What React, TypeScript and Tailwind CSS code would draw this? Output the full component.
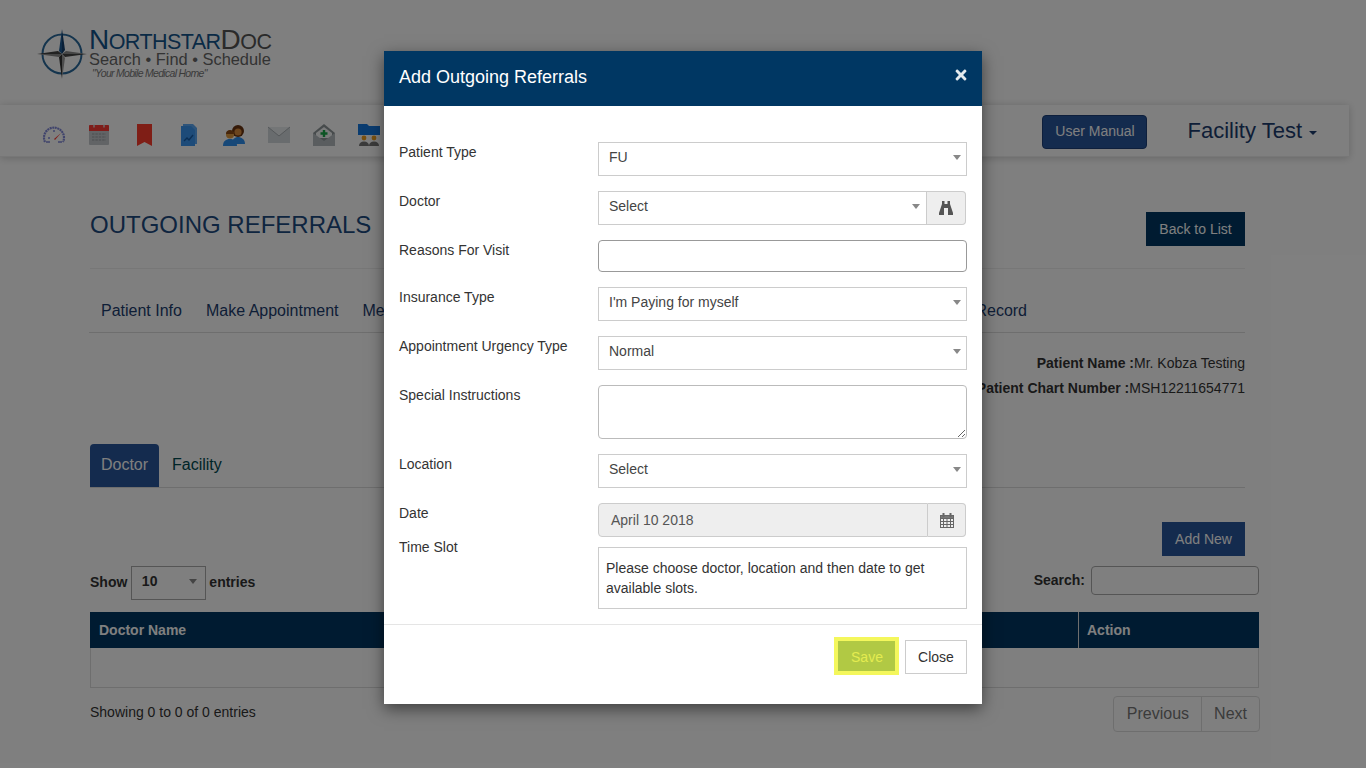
import { FaTimes } from "react-icons/fa";

function Caret() {
  return <span className="h-0 w-0 border-x-[4px] border-t-[5px] border-x-transparent border-t-[#888]" />;
}

function Compass() {
  return (
    <svg width="52" height="52" viewBox="0 0 52 52" className="shrink-0">
      <circle cx="26" cy="26" r="19.500" fill="none" stroke="#2a6a9c" strokeWidth="2" />
      <path d="M26 1 L29 22 L26 26 Z" fill="#123f6e" />
      <path d="M26 1 L23 23 L26 26 Z" fill="#1c5a94" />
      <path d="M51 26 L30 23 L26 26 Z" fill="#8a8a8a" />
      <path d="M51 26 L29 29 L26 26 Z" fill="#444" />
      <path d="M26 51 L29 30 L26 26 Z" fill="#999" />
      <path d="M26 51 L23 29 L26 26 Z" fill="#333" />
      <path d="M1 26 L22 23 L26 26 Z" fill="#444" />
      <path d="M1 26 L23 29 L26 26 Z" fill="#8a8a8a" />
    </svg>
  );
}

function Binoculars() {
  return (
    <svg width="16" height="16" viewBox="0 0 16 16" fill="#555">
      <path d="M4 1h2.500v3h3V1H12v3l3 9v2h-5V8H6v7H1v-2l3-9Z" />
    </svg>
  );
}

function CalendarGrid() {
  return (
    <svg width="14" height="15" viewBox="0 0 14 15" fill="none" stroke="#666" strokeWidth="1">
      <rect x="0.500" y="2.500" width="13" height="12" fill="#eee" />
      <path d="M0.500 5.500h13M0.500 8.500h13M0.500 11.500h13M3.500 5.500v9M7 5.500v9M10.500 5.500v9" />
      <rect x="0.500" y="2.500" width="13" height="3" fill="#777" />
      <path d="M3.500 0v4M10.500 0v4" strokeWidth="2" />
    </svg>
  );
}

const navIcons = [
  // gauge
  <svg key="gauge" width="24" height="24" viewBox="0 0 24 24">
    <path d="M3 19a10 10 0 1 1 18 0" fill="#fff" stroke="#8088d8" strokeWidth="2.2" strokeDasharray="2 .6" />
    <path d="M12 16 L19 10 L13 17 Z" fill="#ff3a34" />
    <circle cx="7" cy="15" r="1" fill="#8088d8" />
    <circle cx="12" cy="8" r="1" fill="#8088d8" />
    <path d="M4 19h4M16 19h4" stroke="#8088d8" strokeWidth="1.5" />
  </svg>,
  // calendar
  <svg key="calendar" width="24" height="24" viewBox="0 0 24 24">
    <rect x="2" y="2" width="20" height="20" rx="1" fill="#c4c8cc" />
    <path d="M2 3a1 1 0 0 1 1-1h18a1 1 0 0 1 1 1v5H2Z" fill="#ff3a34" />
    <path d="M5 11h14M5 14h14M5 17h14" stroke="#9a9ea2" strokeWidth="1.2" strokeDasharray="2.4 1" />
    <path d="M7 1.500v3M17 1.500v3" stroke="#ddd" strokeWidth="1.4" />
  </svg>,
  // bookmark
  <svg key="bookmark" width="24" height="24" viewBox="0 0 24 24">
    <path d="M5 1h15v22l-7.500-4L5 23Z" fill="#ff3c2c" />
  </svg>,
  // document with chart
  <svg key="document" width="24" height="24" viewBox="0 0 24 24">
    <path d="M6 1h10l4 4v16H6Z" fill="#5ca8f4" />
    <path d="M4 3h10l4 4v16H4Z" fill="#3a96f2" />
    <path d="M7 18l3-3 2 2 4-5" fill="none" stroke="#155ca8" strokeWidth="1.4" />
  </svg>,
  // people
  <svg key="people" width="24" height="24" viewBox="0 0 24 24">
    <circle cx="16" cy="8" r="6" fill="#6a3410" />
    <circle cx="16" cy="9" r="3.600" fill="#d98a3c" />
    <path d="M10 21c0-5 3-7 6-7s7 2 7 7Z" fill="#2f90f0" />
    <circle cx="8" cy="11.500" r="4" fill="#e09a40" />
    <path d="M4 11c0-3 2-4 4-4s4 1 4 4Z" fill="#8c4a16" />
    <path d="M1 23c0-5 3-7 7-7s7 2 7 7Z" fill="#2f90f0" />
  </svg>,
  // envelope
  <svg key="envelope" width="24" height="24" viewBox="0 0 24 24">
    <rect x="1" y="4" width="22" height="16" fill="#d2d8dc" />
    <path d="M1 4l11 9L23 4" fill="#e8ecee" stroke="#aab0b4" strokeWidth="1" />
  </svg>,
  // open envelope with plus
  <svg key="open" width="24" height="24" viewBox="0 0 24 24">
    <path d="M1 10L12 1l11 9v13H1Z" fill="#8e9699" />
    <path d="M4 10l8-6 8 6v5H4Z" fill="#f4f6f6" />
    <path d="M12 7v7M8.500 10.500h7" stroke="#18a848" strokeWidth="2.400" />
    <path d="M1 10l11 8 11-8v13H1Z" fill="#b4bbbf" />
  </svg>,
  // folder with people
  <svg key="folder" width="24" height="24" viewBox="0 0 24 24">
    <path d="M1 1h9l2 2h11v9H1Z" fill="#1478e0" />
    <circle cx="7" cy="15" r="2.400" fill="#f0a020" />
    <circle cx="17" cy="15" r="2.400" fill="#f0a020" />
    <path d="M2 23c0-3 2-4.500 5-4.500s5 1.500 5 4.500ZM12 23c0-3 2-4.500 5-4.500s5 1.500 5 4.500Z" fill="#777" />
  </svg>,
];

function SelectField({ value }: { value: string }) {
  return (
    <div className="flex h-[34px] w-full items-center justify-between border border-[#ccc] bg-white pb-1 pl-[10px] pr-[5px] text-[#444]">
      <span>{value}</span>
      <Caret />
    </div>
  );
}

function FormRow({ label, children }: { label: string; children: React.ReactNode }) {
  return (
    <div className="mb-[15px] flex">
      <label className="w-[199px] shrink-0 text-[#333]">{label}</label>
      <div className="w-[369px]">{children}</div>
    </div>
  );
}

function ReferralModal() {
  return (
    <div className="absolute left-[384px] top-[51px] h-[653px] w-[598px] bg-white text-[14px] leading-5 shadow-[0_5px_15px_rgba(0,0,0,0.5)]">
      <div className="flex h-[55px] items-center justify-between bg-[#003763] pl-[15px] pr-[13px] text-white">
        <h4 className="mb-[3px] text-[18px] font-medium">Add Outgoing Referrals</h4>
        <FaTimes className="mb-[7px] text-[16px] text-[#e4eaee]" />
      </div>
      <div className="px-[15px] pt-[36px]">
        <FormRow label="Patient Type">
          <SelectField value="FU" />
        </FormRow>
        <FormRow label="Doctor">
          <div className="flex h-[34px]">
            <div className="flex w-[329px] items-center justify-between border border-[#ccc] bg-white pb-1 pl-[10px] pr-[6px] text-[#444]">
              <span>Select</span>
              <Caret />
            </div>
            <div className="flex w-[39px] items-center justify-center rounded-r border border-l-0 border-[#ccc] bg-[#eee]">
              <Binoculars />
            </div>
          </div>
        </FormRow>
        <FormRow label="Reasons For Visit">
          <input readOnly className="block h-[32px] w-full rounded border border-[#999] bg-white px-2" />
        </FormRow>
        <FormRow label="Insurance Type">
          <SelectField value="I'm Paying for myself" />
        </FormRow>
        <FormRow label="Appointment Urgency Type">
          <SelectField value="Normal" />
        </FormRow>
        <FormRow label="Special Instructions">
          <textarea readOnly className="block h-[54px] w-full resize rounded-sm border border-[#bbb] bg-white" />
        </FormRow>
        <FormRow label="Location">
          <SelectField value="Select" />
        </FormRow>
        <div className="flex">
          <label className="w-[199px] shrink-0 text-[#333]">Date</label>
          <div className="flex h-[34px] w-[368px]">
            <div className="flex w-[330px] items-center rounded-l border border-[#ccc] bg-[#eee] pl-[12px] text-[#555]">
              April 10 2018
            </div>
            <div className="flex w-[38px] items-center justify-center rounded-r border border-l-0 border-[#ccc] bg-[#eee]">
              <CalendarGrid />
            </div>
          </div>
        </div>
        <div className="flex">
          <label className="w-[199px] shrink-0 text-[#333]">Time Slot</label>
          <div className="mt-[10px] h-[62px] w-[369px] border border-[#ccc] px-[7px] py-[10px] leading-[20px] text-[#333]">
            Please choose doctor, location and then date to get available slots.
          </div>
        </div>
      </div>
      <div className="mt-[15px] flex items-center justify-end gap-[6px] border-t border-[#e5e5e5] pr-[15px] pt-[12px]">
        <button className="h-[38px] w-[65px] border-[4px] border-[#f4f75c] bg-[#b1c944] pl-px pt-px text-[#e4ec50]">Save</button>
        <button className="mt-[2px] h-[34px] w-[62px] border border-[#ccc] bg-white text-[#333]">Close</button>
      </div>
    </div>
  );
}

export default function App() {
  return (
    <div
      className="relative h-screen overflow-hidden bg-white text-[14px] text-[#333]"
      style={{ fontFamily: '"Liberation Sans", Arial, sans-serif' }}
    >
      {/* logo */}
      <div className="flex h-[104px] items-start pl-[36px] pt-[28px]">
        <Compass />
        <div className="-mt-px ml-[1px] w-[190px]">
          <div className="flex h-[25px] items-baseline whitespace-nowrap uppercase leading-[25px] tracking-[-0.55px]">
            <span className="text-[28px] text-[#14558c]">N</span>
            <span className="text-[21.500px] text-[#14558c]">orthstar</span>
            <span className="text-[28px] text-[#555]">D</span>
            <span className="text-[21.500px] text-[#555]">oc</span>
          </div>
          <div className="whitespace-nowrap text-[16.400px] leading-[15px] text-[#666]">Search • Find • Schedule</div>
          <div className="pl-[3px] whitespace-nowrap text-[10.500px] italic leading-[12px] tracking-[-0.7px] text-[#777]">
            "Your Mobile Medical Home"
          </div>
        </div>
      </div>

      {/* top nav */}
      <div className="mt-px flex h-[52px] w-[1349px] items-center justify-between border-b border-[#eee] bg-white pl-[42px] pr-[32px] shadow-[0_1px_8px_rgba(0,0,0,0.2)]">
        <div className="mt-[8px] flex gap-[21px]">{navIcons}</div>
        <div className="mt-[2px] flex items-center">
          <button className="h-[34px] w-[105px] rounded border border-[#1c3f78] bg-[#28569c] text-white">User Manual</button>
          <span className="mb-[2px] ml-[40px] text-[22px] text-[#1c3d6e]">Facility Test</span>
          <span className="ml-[7px] mt-[2px] h-0 w-0 border-x-[4px] border-t-[4px] border-x-transparent border-t-[#1c3d6e]" />
        </div>
      </div>

      {/* page content */}
      <div className="ml-[90px] w-[1155px]">
        <div className="mt-[55px] flex h-[34px] items-center justify-between">
          <h2 className="mb-[8px] text-[24px] uppercase text-[#1c4a80]">Outgoing Referrals</h2>
          <button className="h-[34px] w-[99px] bg-[#003763] text-white">Back to List</button>
        </div>
        <div className="mt-[22px] h-px bg-[#eee]" />
        <div className="-ml-px flex h-[64px] items-center border-b border-[#ddd] pt-[20px] text-[16px] text-[#1c3d6e]">
          <span className="px-3">Patient Info</span>
          <span className="px-3">Make Appointment</span>
          <span className="px-3">Medications</span>
          <span className="ml-[444px] px-3">Medical Record</span>
        </div>
        <div className="mt-[18px] text-right leading-[25px]">
          <div>
            <b>Patient Name :</b>Mr. Kobza Testing
          </div>
          <div>
            <b>Patient Chart Number :</b>MSH12211654771
          </div>
        </div>

        <div className="mt-[43px] flex h-[44px] border-b border-[#ddd] text-[16px]">
          <span className="flex h-[43px] w-[69px] items-center justify-center rounded-t bg-[#28569c] pb-[2px] text-white">Doctor</span>
          <span className="flex h-[43px] items-center px-[13px] pb-[2px] text-[#004a50]">Facility</span>
        </div>

        <div className="mt-[34px] flex justify-end">
          <button className="h-[34px] w-[83px] bg-[#28569c] text-white">Add New</button>
        </div>

        <div className="mt-[10px] flex h-[34px] w-[1169px] items-center justify-between font-bold">
          <div className="flex items-center">
            <span className="mt-[-1px]">Show</span>
            <div className="mx-[3.500px] flex h-[34px] w-[75px] items-center justify-between border border-[#aaa] pb-[3px] pl-[10px] pr-[8px]">
              <span>10</span>
              <Caret />
            </div>
            <span className="mt-[-1px]">entries</span>
          </div>
          <div className="mb-[5px] flex items-center">
            <span className="-mt-px">Search:</span>
            <input readOnly className="ml-[6px] h-[29px] w-[168px] rounded-sm border border-[#aaa] bg-white" />
          </div>
        </div>

        <div className="mt-[12px] w-[1169px]">
          <div className="flex h-[36px] items-center justify-between bg-[#003763] font-bold text-white">
            <span className="pl-[9px]">Doctor Name</span>
            <span className="flex h-full w-[181px] items-center border-l border-[#ddd] pl-[8px]">Action</span>
          </div>
          <div className="h-[40px] border border-t-0 border-[#ddd]" />
        </div>

        <div className="mt-[8px] flex w-[1170px] items-start justify-between">
          <span className="mt-[6px] leading-5">Showing 0 to 0 of 0 entries</span>
          <div className="flex h-[36px] rounded border border-[#ddd] text-[16px] text-[#777]">
            <span className="flex items-center border-r border-[#ddd] pl-[13px] pr-[12px]">Previous</span>
            <span className="flex items-center px-[12px]">Next</span>
          </div>
        </div>
      </div>

      {/* backdrop + modal */}
      <div className="absolute inset-0 bg-black/50" />
      <ReferralModal />
    </div>
  );
}
